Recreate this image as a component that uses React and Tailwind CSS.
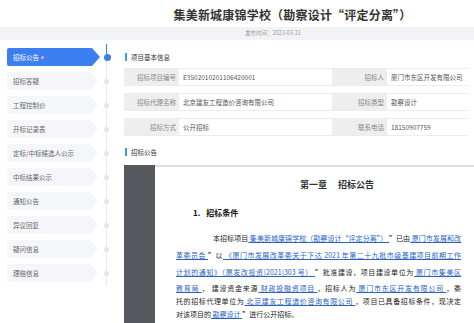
import React from "react";

const F = { fontFamily: '"Noto Sans CJK SC", "Noto Sans", sans-serif' };

const items = [
  "招标公告",
  "招标答疑",
  "工程控制价",
  "开标记录表",
  "定标/中标候选人公示",
  "中标结果公示",
  "通知公告",
  "异议回复",
  "疑问信息",
  "理赔信息",
];

function L({ children }) {
  return <span className="text-[#2a63c6] underline underline-offset-1">{children}</span>;
}

function SectionHeader({ text }) {
  return (
    <div className="flex items-center h-[10px] pl-[1px] gap-[4px]">
      <div className="w-[2px] h-[8px] bg-[#3a9be0]" />
      <span className="text-[6.5px] text-[#333] leading-none">{text}</span>
    </div>
  );
}

function Row({ l1, v1, l2, v2 }) {
  return (
    <div className="flex h-[18px] border-y border-[#ececec] text-[6.5px] leading-none">
      <div className="w-[55px] bg-[#eeeeee] flex items-center justify-end pr-[3px] text-[#888]">{l1}</div>
      <div className="w-[153px] flex items-center pl-[4px] text-[#555]">{v1}</div>
      <div className="w-[55px] bg-[#eeeeee] flex items-center justify-end pr-[3px] text-[#888]">{l2}</div>
      <div className="flex-1 flex items-center pl-[4px] text-[#555]">{v2}</div>
    </div>
  );
}

export default function App() {
  return (
    <div className="w-[474px] h-[323px] overflow-hidden bg-white relative" style={F}>
      <div className="h-[27px] flex items-center justify-center pl-[120px] pr-[9px] pt-[2px]">
        <span className="text-[12px] font-bold text-[#333] tracking-[0.2px]">集美新城康锦学校（勘察设计“评定分离”）</span>
      </div>
      <div className="h-[13px] bg-[#f1f3f6] flex items-center pl-[245px]">
        <span className="text-[5.5px] text-[#999] leading-none">发布时间：2023-03-21</span>
      </div>

      <div className="flex">
        {/* sidebar */}
        <div className="w-[120px] relative pt-[8px]">
          <div className="absolute left-[106px] top-[4px] h-[242px] w-px bg-[#e6e8eb]" />
          <div className="absolute left-[106px] top-[4px] h-[10px] w-px bg-[#3b7ff0]" />
          <div className="flex flex-col gap-[6px]">
            {items.map((t, i) => (
              <div key={t} className="flex items-center h-[18px]">
                <div
                  className={
                    "ml-[7px] h-[18px] flex items-center pl-[6px] text-[6.5px] leading-none rounded-l-[2px] " +
                    (i === 0 ? "w-[93px] bg-[#3b7ff0] text-white" : "w-[91px] bg-[#f4f6f9] text-[#666]")
                  }
                  style={{ clipPath: "polygon(0 0, calc(100% - 8px) 0, 100% 50%, calc(100% - 8px) 100%, 0 100%)" }}
                >
                  {t}
                  {i === 0 && <span className="ml-[2px] w-[3px] h-[3px] rounded-full bg-[#f6a3b5]" />}
                </div>
                <div className="flex-1 flex justify-center pr-[7px]">
                  {i === 0 ? (
                    <div className="w-[7px] h-[7px] rounded-full bg-[#3b7ff0] relative left-[0.5px]" />
                  ) : (
                    <div className="w-[5px] h-[5px] rounded-full bg-[#e3e5e8] relative left-[0.5px]" />
                  )}
                </div>
              </div>
            ))}
          </div>
        </div>

        {/* main */}
        <div className="flex-1 pl-[4px] pt-[12px]">
          <SectionHeader text="项目基本信息" />
          <div className="mt-[6px] mr-[6px] flex flex-col gap-[7px]">
            <Row l1="招标项目编号" v1="E3502010201106420001" l2="招标人" v2="厦门市东区开发有限公司" />
            <Row l1="招标代理名称" v1="北京建友工程造价咨询有限公司" l2="招标类型" v2="勘察设计" />
            <Row l1="招标方式" v1="公开招标" l2="联系电话" v2="18150907759" />
          </div>
          <div className="mt-[11px]">
            <SectionHeader text="招标公告" />
          </div>
          <div className="mt-[8px] flex h-[200px]">
            <div className="w-[31px] bg-[#55585c]" />
            <div className="flex-1 bg-white border-t-2 border-[#dedede]">
              <div className="pt-[13px] pl-[145px] text-[9px] font-bold text-[#333] leading-none flex gap-[11px]">
                <span>第一章</span>
                <span>招标公告</span>
              </div>
              <div className="mt-[20px] pl-[38px] text-[8px] font-bold text-[#111] leading-none flex gap-[6px]">
                <span>1.</span>
                <span>招标条件</span>
              </div>
              <div className="mt-[18px] ml-[21px] w-[285px] text-[7px] text-[#222] leading-none">
                <div className="h-[17px] pl-[37px] text-justify [text-align-last:justify] whitespace-nowrap">
                  本招标项目<L>&nbsp;集美新城康锦学校（勘察设计“评定分离”）&nbsp;</L>”已由<L>&nbsp;厦门市发展和改</L>
                </div>
                <div className="h-[17px] text-justify [text-align-last:justify] whitespace-nowrap">
                  <L>革委员会&nbsp;</L>”以<L>&nbsp;《厦门市发展改革委关于下达 2021 年第二十九批市级基建项目前期工作</L>
                </div>
                <div className="h-[16px] text-justify [text-align-last:justify] whitespace-nowrap">
                  <L>计划的通知》（厦发改投资[2021]303 号）&nbsp;</L>”批准建设，项目建设单位为<L>&nbsp;厦门市集美区</L>
                </div>
                <div className="h-[13px] text-justify [text-align-last:justify] whitespace-nowrap">
                  <L>教育局&nbsp;</L>， 建设资金来源<L>&nbsp;财政投融资项目&nbsp;</L>，招标人为<L>&nbsp;厦门市东区开发有限公司&nbsp;</L>，委
                </div>
                <div className="h-[13px] text-justify [text-align-last:justify] whitespace-nowrap">
                  托的招标代理单位为<L>&nbsp;北京建友工程造价咨询有限公司&nbsp;</L>，项目已具备招标条件，现决定
                </div>
                <div className="h-[13px] whitespace-nowrap">
                  对该项目的<L>&nbsp;勘察设计&nbsp;</L>”进行公开招标。
                </div>
              </div>
            </div>
          </div>
        </div>
      </div>
    </div>
  );
}
